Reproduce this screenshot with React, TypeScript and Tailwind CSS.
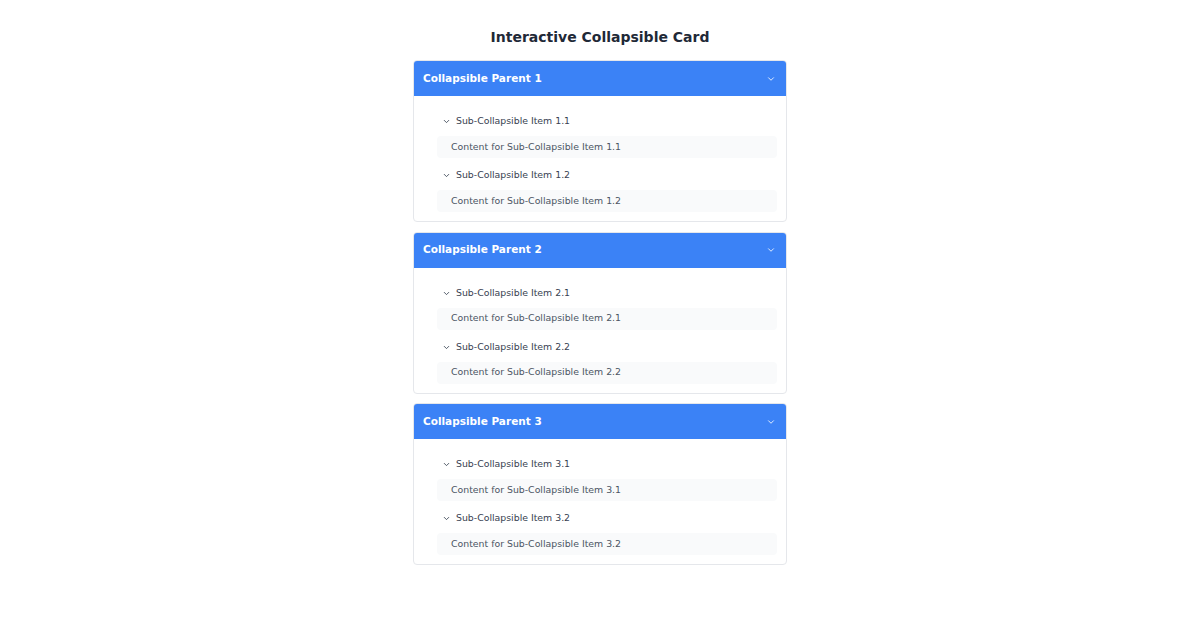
import { ChevronDown } from 'lucide-react';

interface SubItem {
    id: string;
    title: string;
    content: string;
}

interface Section {
    id: string;
    title: string;
    items: SubItem[];
}

const sections: Section[] = [1, 2, 3].map((n) => ({
    id: `parent-${n}`,
    title: `Collapsible Parent ${n}`,
    items: [1, 2].map((m) => ({
        id: `sub-${n}-${m}`,
        title: `Sub-Collapsible Item ${n}.${m}`,
        content: `Content for Sub-Collapsible Item ${n}.${m}`,
    })),
}));

function SubCollapsible({ item }: { item: SubItem }) {
    return (
        <div className="flex flex-col">
            <button type="button" className="flex items-center gap-[5px] h-[17px] pl-[5px] text-[9.35px] text-[#374151] text-left">
                <ChevronDown size={9} strokeWidth={2.25} />
                {item.title}
            </button>
            <div className="mt-[6px] h-[22px] flex items-center px-[14px] rounded bg-[#f9fafb] text-[9.35px] text-[#4b5563]">
                {item.content}
            </div>
        </div>
    );
}

function ParentCard({ section }: { section: Section }) {
    return (
        <div className="rounded border border-[#e5e7eb] bg-white overflow-hidden">
            <button type="button" className="w-full h-[35px] flex items-center justify-between px-[9px] bg-[#3b82f6] text-white text-[10.5px] font-bold">
                {section.title}
                <ChevronDown size={10} strokeWidth={2} className="mr-[1px]" />
            </button>
            <div className="pt-[17px] pb-[9px] pl-[23px] pr-[9px] flex flex-col gap-[9px]">
                {section.items.map((item) => (
                    <SubCollapsible key={item.id} item={item} />
                ))}
            </div>
        </div>
    );
}

export default function App() {
    return (
        <div className="w-full min-h-[630px] bg-white flex justify-center" style={{ fontFamily: '"DejaVu Sans", sans-serif' }}>
            <div className="w-[374px] flex flex-col pt-[27px]">
                <h1 className="text-center text-[14px] leading-[20px] font-bold text-[#1f2937] mb-[13px]">Interactive Collapsible Card</h1>
                <div className="flex flex-col gap-[9.5px]">
                    {sections.map((s) => (
                        <ParentCard key={s.id} section={s} />
                    ))}
                </div>
            </div>
        </div>
    );
}
